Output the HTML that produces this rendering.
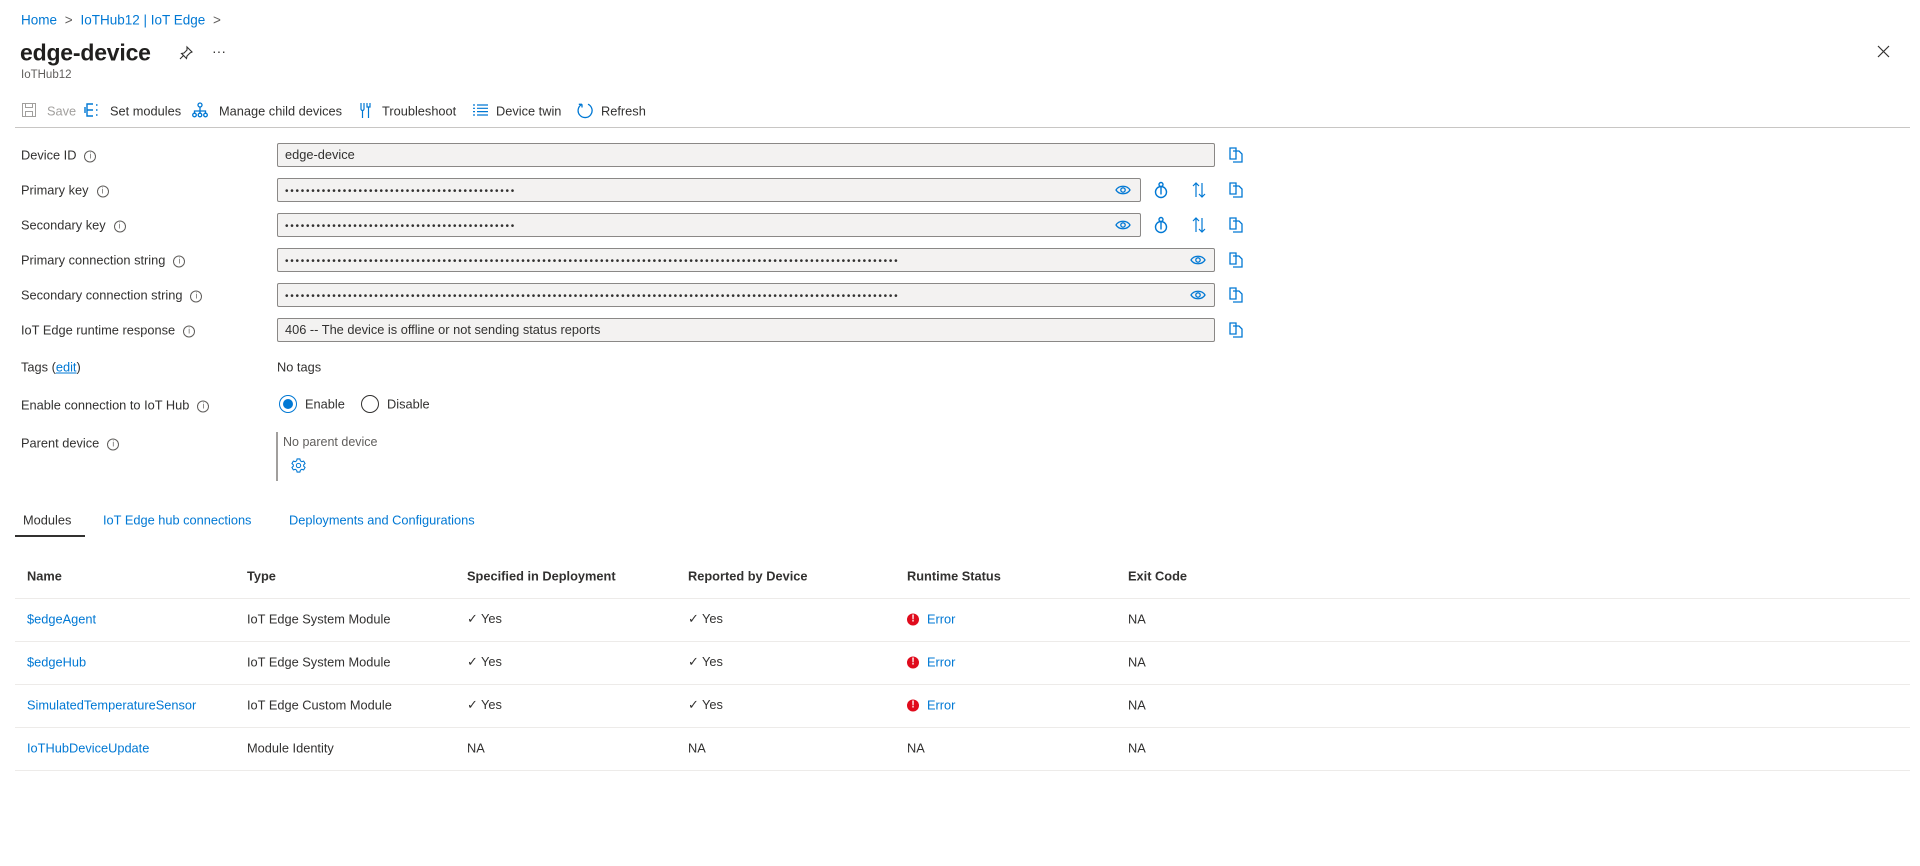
<!DOCTYPE html>
<html><head><meta charset="utf-8">
<style>
*{margin:0;padding:0;box-sizing:border-box}
body{width:1920px;height:866px;background:#fff;font-family:"Segoe UI","Liberation Sans",sans-serif;color:#323130;font-size:12.8px;position:relative;overflow:hidden}
.a{position:absolute;white-space:nowrap}
.l{color:#0078d4}
.vc{transform:translateY(-50%)}
.inp{position:absolute;left:277px;height:24px;background:#f3f2f1;border:1px solid #8a8886;border-radius:2px;font-size:12.8px;line-height:22px;padding-left:7px}
.dots{font-size:10px;letter-spacing:1.75px;color:#323130}
.info{display:inline-block;width:12px;height:12px;border:1px solid #605e5c;border-radius:50%;font-size:8px;line-height:10px;text-align:center;color:#605e5c;margin-left:8px;vertical-align:1px}
.hr{position:absolute;left:15px;width:1895px;height:1px;background:#edebe9}
.err{display:flex;align-items:center}
.err i{display:inline-block;width:12px;height:12px;border-radius:50%;background:#e00b1c;color:#fff;font-size:10px;font-weight:700;text-align:center;line-height:12px;font-style:normal;margin-right:8px}
</style></head><body>
<div class="a vc" style="left:21px;top:20px;font-size:13.5px"><span class="l">Home</span> <span style="color:#605e5c;margin:0 4px">&gt;</span> <span class="l">IoTHub12 | IoT Edge</span> <span style="color:#605e5c;margin-left:4px">&gt;</span></div>
<div class="a vc" style="left:20px;top:53px;font-size:23px;font-weight:600;color:#201f1e;letter-spacing:-0.2px">edge-device</div>
<svg class="a" style="left:178px;top:45px" width="16" height="16" viewBox="0 0 16 16" fill="none" stroke="#323130" stroke-width="1.1"><path d="M9 2l5 5-2 1-3 3-.5 2.5L3.5 8.5 6 8l3-3z M6 10l-4 4"/></svg>
<div class="a vc" style="left:212px;top:51px;font-size:14px">···</div>
<div class="a vc" style="left:21px;top:75px;font-size:11.5px;color:#605e5c">IoTHub12</div>
<svg class="a" style="left:1877px;top:45px" width="13" height="13" viewBox="0 0 13 13" stroke="#323130" stroke-width="1.2"><path d="M1 1l11 11M12 1L1 12"/></svg>

<svg class="a" style="left:22px;top:103px" width="14" height="14" viewBox="0 0 14 14" fill="none" stroke="#a19f9d"><rect x=".5" y=".5" width="13" height="13"/><rect x="3.5" y=".5" width="7" height="4"/><rect x="3.5" y="8.5" width="7" height="5"/></svg>
<div class="a vc" style="left:47px;top:111px;color:#a19f9d">Save</div>
<svg class="a" style="left:84px;top:103px" width="16" height="14" viewBox="0 0 16 14" fill="none" stroke="#0078d4" stroke-width="1.4"><path d="M9 1H3v12h6M3 7h6M1 4v6"/><path d="M12 2h2M12 7h2M12 12h2" stroke-dasharray="1.5 1.5"/></svg>
<div class="a vc" style="left:110px;top:111px">Set modules</div>
<svg class="a" style="left:192px;top:102px" width="16" height="16" viewBox="0 0 16 16" fill="none" stroke="#0078d4" stroke-width="1.3"><circle cx="8" cy="3" r="2"/><circle cx="2.5" cy="13" r="1.8"/><circle cx="8" cy="13" r="1.8"/><circle cx="13.5" cy="13" r="1.8"/><path d="M8 5v6M2.5 11V9h11v2"/></svg>
<div class="a vc" style="left:219px;top:111px">Manage child devices</div>
<svg class="a" style="left:359px;top:102px" width="12" height="17" viewBox="0 0 12 17" fill="none" stroke="#0078d4" stroke-width="1.2"><path d="M2 1v6a1.5 1.5 0 0 0 3 0V1M3.5 8v8M8 1v4h3V1M9.5 5v11"/></svg>
<div class="a vc" style="left:382px;top:111px">Troubleshoot</div>
<svg class="a" style="left:473px;top:104px" width="15" height="12" viewBox="0 0 15 12" stroke="#0078d4" stroke-width="1.2"><path d="M0 1h2M4 1h11M0 4.3h2M4 4.3h11M0 7.6h2M4 7.6h11M0 11h2M4 11h11"/></svg>
<div class="a vc" style="left:496px;top:111px">Device twin</div>
<svg class="a" style="left:577px;top:102px" width="17" height="17" viewBox="0 0 17 17" fill="none" stroke="#0078d4" stroke-width="1.3"><path d="M11 2.2A7 7 0 1 1 5 2.3M5 2.3V5.5M5 2.3H1.8"/></svg>
<div class="a vc" style="left:601px;top:111px">Refresh</div>
<div class="a" style="left:15px;top:127px;width:1895px;height:1px;background:#c8c6c4"></div>

<div class="a vc" style="left:21px;top:155px">Device ID<span class="info">i</span></div>
<div class="inp" style="top:143px;width:938px">edge-device</div>
<div class="a vc" style="left:21px;top:190px">Primary key<span class="info">i</span></div>
<div class="inp" style="top:178px;width:864px"><span class="dots">••••••••••••••••••••••••••••••••••••••••••••</span></div>
<div class="a vc" style="left:21px;top:225px">Secondary key<span class="info">i</span></div>
<div class="inp" style="top:213px;width:864px"><span class="dots">••••••••••••••••••••••••••••••••••••••••••••</span></div>
<div class="a vc" style="left:21px;top:260px">Primary connection string<span class="info">i</span></div>
<div class="inp" style="top:248px;width:938px"><span class="dots">•••••••••••••••••••••••••••••••••••••••••••••••••••••••••••••••••••••••••••••••••••••••••••••••••••••••••••••••••••••</span></div>
<div class="a vc" style="left:21px;top:295px">Secondary connection string<span class="info">i</span></div>
<div class="inp" style="top:283px;width:938px"><span class="dots">•••••••••••••••••••••••••••••••••••••••••••••••••••••••••••••••••••••••••••••••••••••••••••••••••••••••••••••••••••••</span></div>
<div class="a vc" style="left:21px;top:330px">IoT Edge runtime response<span class="info">i</span></div>
<div class="inp" style="top:318px;width:938px">406 -- The device is offline or not sending status reports</div>

<svg width="0" height="0" style="position:absolute"><defs>
<symbol id="eye" viewBox="0 0 16 10"><path d="M1 5C4 0 12 0 15 5C12 10 4 10 1 5Z" fill="none" stroke="#0078d4" stroke-width="1.3"/><circle cx="8" cy="5" r="2.2" fill="none" stroke="#0078d4" stroke-width="1.3"/></symbol>
<symbol id="copy" viewBox="0 0 14 16"><path d="M1 1h6v11H1z M4 4h6l3 3v8H4" fill="none" stroke="#0078d4" stroke-width="1.3"/></symbol>
<symbol id="regen" viewBox="0 0 14 18"><circle cx="7" cy="11" r="5.5" fill="none" stroke="#0078d4" stroke-width="1.4"/><circle cx="7" cy="3.5" r="2" fill="none" stroke="#0078d4" stroke-width="1.4"/><path d="M7 5.5v8" stroke="#0078d4" stroke-width="1.4"/></symbol>
<symbol id="swap" viewBox="0 0 14 16"><path d="M4 15V1M1 4l3-3 3 3M10 1v14M7 12l3 3 3-3" fill="none" stroke="#0078d4" stroke-width="1.2"/></symbol>
</defs></svg>
<svg class="a" style="left:1115px;top:185px" width="16" height="10"><use href="#eye"/></svg>
<svg class="a" style="left:1115px;top:220px" width="16" height="10"><use href="#eye"/></svg>
<svg class="a" style="left:1190px;top:255px" width="16" height="10"><use href="#eye"/></svg>
<svg class="a" style="left:1190px;top:290px" width="16" height="10"><use href="#eye"/></svg>
<svg class="a" style="left:1154px;top:181px" width="14" height="18"><use href="#regen"/></svg>
<svg class="a" style="left:1154px;top:216px" width="14" height="18"><use href="#regen"/></svg>
<svg class="a" style="left:1192px;top:182px" width="14" height="16"><use href="#swap"/></svg>
<svg class="a" style="left:1192px;top:217px" width="14" height="16"><use href="#swap"/></svg>
<svg class="a" style="left:1229px;top:147px" width="14" height="16"><use href="#copy"/></svg>
<svg class="a" style="left:1229px;top:182px" width="14" height="16"><use href="#copy"/></svg>
<svg class="a" style="left:1229px;top:217px" width="14" height="16"><use href="#copy"/></svg>
<svg class="a" style="left:1229px;top:252px" width="14" height="16"><use href="#copy"/></svg>
<svg class="a" style="left:1229px;top:287px" width="14" height="16"><use href="#copy"/></svg>
<svg class="a" style="left:1229px;top:322px" width="14" height="16"><use href="#copy"/></svg>

<div class="a vc" style="left:21px;top:367px">Tags (<span class="l" style="text-decoration:underline">edit</span>)</div>
<div class="a vc" style="left:277px;top:367px">No tags</div>
<div class="a vc" style="left:21px;top:405px">Enable connection to IoT Hub<span class="info">i</span></div>
<div class="a" style="left:279px;top:395px;width:18px;height:18px;border:1px solid #0078d4;border-radius:50%"><div style="position:absolute;left:3px;top:3px;width:10px;height:10px;border-radius:50%;background:#0078d4"></div></div>
<div class="a vc" style="left:305px;top:404px">Enable</div>
<div class="a" style="left:361px;top:395px;width:18px;height:18px;border:1px solid #323130;border-radius:50%"></div>
<div class="a vc" style="left:387px;top:404px">Disable</div>
<div class="a vc" style="left:21px;top:443px">Parent device<span class="info">i</span></div>
<div class="a" style="left:276px;top:432px;width:2px;height:49px;background:#a19f9d"></div>
<div class="a vc" style="left:283px;top:442px;color:#605e5c;font-size:12.5px">No parent device</div>
<svg class="a" style="left:291px;top:458px" width="15" height="15" viewBox="0 0 16 16" fill="none" stroke="#0078d4" stroke-width="1.1"><path d="M6.5 1h3l.5 2 1.5.9 2-.6 1.5 2.6-1.5 1.4v1.4l1.5 1.4-1.5 2.6-2-.6-1.5.9-.5 2h-3l-.5-2-1.5-.9-2 .6L1 10.1l1.5-1.4V7.3L1 5.9l1.5-2.6 2 .6L6 3z"/><circle cx="8" cy="8" r="2.3"/></svg>

<div class="a vc" style="left:23px;top:520px">Modules</div>
<div class="a" style="left:15px;top:535px;width:70px;height:2px;background:#323130"></div>
<div class="a vc l" style="left:103px;top:520px">IoT Edge hub connections</div>
<div class="a vc l" style="left:289px;top:520px">Deployments and Configurations</div>

<div class="a vc" style="left:27px;top:576px;font-weight:600">Name</div>
<div class="a vc" style="left:247px;top:576px;font-weight:600">Type</div>
<div class="a vc" style="left:467px;top:576px;font-weight:600">Specified in Deployment</div>
<div class="a vc" style="left:688px;top:576px;font-weight:600">Reported by Device</div>
<div class="a vc" style="left:907px;top:576px;font-weight:600">Runtime Status</div>
<div class="a vc" style="left:1128px;top:576px;font-weight:600">Exit Code</div>
<div class="hr" style="top:598px"></div>
<div class="hr" style="top:641px"></div>
<div class="hr" style="top:684px"></div>
<div class="hr" style="top:727px"></div>
<div class="hr" style="top:770px"></div>

<div class="a vc l" style="left:27px;top:619px">$edgeAgent</div>
<div class="a vc" style="left:247px;top:619px">IoT Edge System Module</div>
<div class="a vc" style="left:467px;top:619px">✓ Yes</div>
<div class="a vc" style="left:688px;top:619px">✓ Yes</div>
<div class="a vc err" style="left:907px;top:619px"><i>!</i><span class="l">Error</span></div>
<div class="a vc" style="left:1128px;top:619px">NA</div>

<div class="a vc l" style="left:27px;top:662px">$edgeHub</div>
<div class="a vc" style="left:247px;top:662px">IoT Edge System Module</div>
<div class="a vc" style="left:467px;top:662px">✓ Yes</div>
<div class="a vc" style="left:688px;top:662px">✓ Yes</div>
<div class="a vc err" style="left:907px;top:662px"><i>!</i><span class="l">Error</span></div>
<div class="a vc" style="left:1128px;top:662px">NA</div>

<div class="a vc l" style="left:27px;top:705px">SimulatedTemperatureSensor</div>
<div class="a vc" style="left:247px;top:705px">IoT Edge Custom Module</div>
<div class="a vc" style="left:467px;top:705px">✓ Yes</div>
<div class="a vc" style="left:688px;top:705px">✓ Yes</div>
<div class="a vc err" style="left:907px;top:705px"><i>!</i><span class="l">Error</span></div>
<div class="a vc" style="left:1128px;top:705px">NA</div>

<div class="a vc l" style="left:27px;top:748px">IoTHubDeviceUpdate</div>
<div class="a vc" style="left:247px;top:748px">Module Identity</div>
<div class="a vc" style="left:467px;top:748px">NA</div>
<div class="a vc" style="left:688px;top:748px">NA</div>
<div class="a vc" style="left:907px;top:748px">NA</div>
<div class="a vc" style="left:1128px;top:748px">NA</div>
</body></html>
